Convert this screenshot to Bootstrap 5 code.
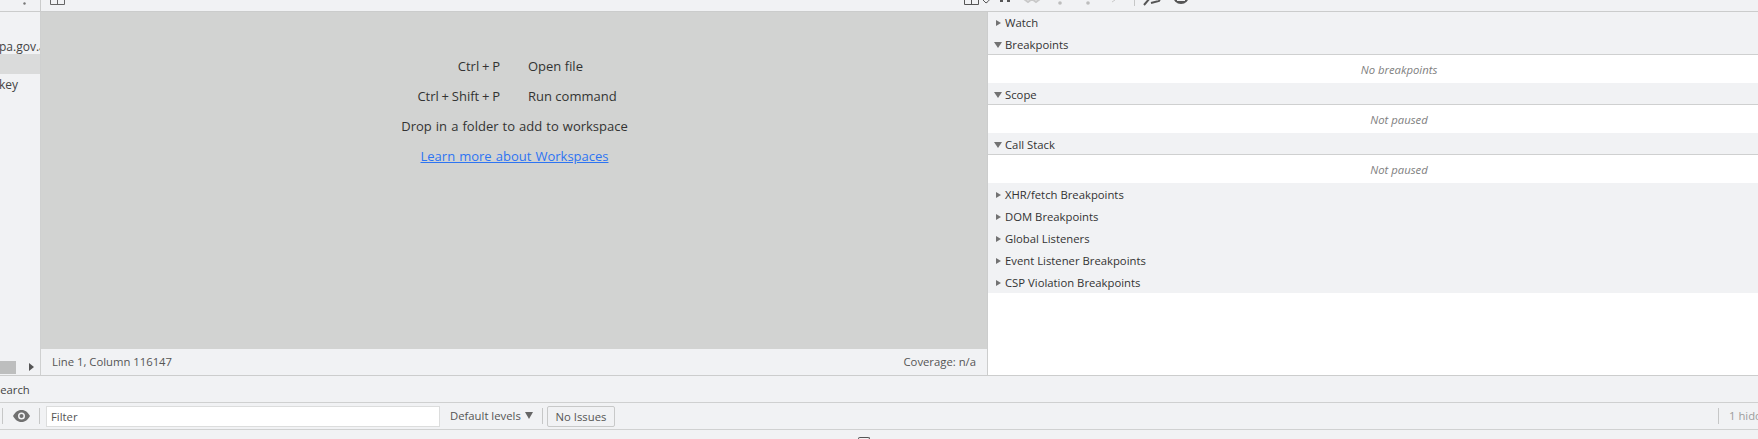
<!DOCTYPE html>
<html lang="en">
<head>
<meta charset="utf-8">
<title>Sources panel</title>
<link href="https://cdn.jsdelivr.net/npm/bootstrap@5.3.0/dist/css/bootstrap.min.css" rel="stylesheet">
<style>
html,body{height:439px;overflow:hidden}
body{background:#f1f2f4;font-family:"Open Sans","Noto Sans",sans-serif;font-size:11.3px;color:#444;line-height:1}
.shell{height:439px;width:1758px}
.topbar{height:12px;border-bottom:1px solid #cbcccc;background:#f1f2f4;flex:none}
.topleft{width:41px;border-right:1px solid #cbcccc;height:100%;flex:none}
.topbar svg{display:block}
.mainrow{height:364px;flex:none;border-bottom:1px solid #cccdcd}
.navside{width:41px;flex:none;border-right:1px solid #cfd0d0;overflow:hidden;background:#f1f2f4;font-size:12px;color:#444}
.navgap-top{height:28px;flex:none}
.navline{height:14px;line-height:14px;white-space:nowrap;flex:none;margin-left:-1px}
.navsel{height:20px;background:#dadbdb;flex:none}
.navgap{height:4px;flex:none}
.navtail{height:14px;margin-top:auto;margin-bottom:1px}
.navthumb{width:16px;height:13px;background:#bdbebe}
.tri-r{width:0;height:0;border-left:5px solid #555;border-top:4px solid transparent;border-bottom:4px solid transparent;margin-right:-2px}
.midcol{width:947px;flex:none;border-right:1px solid #cccdcd}
.editor{background:#d2d3d2;flex:1 1 auto;font-size:13px;color:#333;padding-top:44px}
.kbline{height:30px;line-height:20px}
.kbkey{width:487px;text-align:right;padding-right:28px;word-spacing:-.6px}
.hintline{height:30px;line-height:20px;width:946px;text-align:center;word-spacing:.7px;padding-left:1px}
.hintlink{color:#2d74f2}
.statusline{height:26px;flex:none;padding:0 11px 0 11px;color:#555}
.rightcol{flex:1 1 auto;background:#fff;min-width:0}
.sechead{height:22px;background:#f1f2f4;padding-left:6px;color:#333;gap:3px;flex:none}
.seclow{padding-top:2px}
.secopen{border-bottom:1px solid #cfd0d0;padding-top:3px}
.secfirst{height:21px;padding-top:1px}
.tribox{width:8px;display:flex;justify-content:center;flex:none}
.tri-rs{width:0;height:0;border-left:5px solid #727272;border-top:3.5px solid transparent;border-bottom:3.5px solid transparent}
.tri-d{width:0;height:0;border-top:6px solid #727272;border-left:4px solid transparent;border-right:4px solid transparent}
.secbody{height:28px;background:#fff;color:#808080;font-style:italic;padding-left:52px;padding-top:1px;flex:none}
.searchrow{height:27px;flex:none;border-bottom:1px solid #cfd0d0;color:#444;overflow:hidden;padding-top:2px}
.searchrow span{margin-left:-6px}
.conbar{height:27px;flex:none;border-bottom:1px solid #d0d1d1;overflow:hidden}
.vsep{width:1px;height:16px;background:#c6c7c7;flex:none}
.vsep-a{margin-left:2px}
.vsep-b{margin-left:9px}
.vsep-c{margin-left:1103px}
.eyeicon{margin-left:10px;flex:none}
.filterbox{width:394px;height:21px;background:#fff;border:1px solid #dcdddd;margin-left:6px;padding-left:4px;padding-top:2px;color:#555;flex:none}
.levels{margin-left:10px;color:#555;width:92px;flex:none;gap:4px}
.tri-lv{width:0;height:0;border-top:7px solid #666;border-left:4px solid transparent;border-right:4px solid transparent}
.issuesbtn{height:21px;width:68px;margin-left:4px;border:1px solid #c8c9c9;border-radius:2px;color:#555;flex:none;padding-top:2px}
.hiddentxt{color:#9c9c9c;margin-left:10px;white-space:nowrap}
.bottomstrip{height:9px;flex:none;position:relative}
.dockicon{width:12px;height:7px;border:1px solid #555;border-bottom:0;border-radius:2px 2px 0 0;position:absolute;left:858px;top:7px}
.topicons{flex:none;margin-left:auto}
.topleftgap{margin-left:4px;flex:none}
</style>
</head>
<body>
<div class="shell d-flex flex-column">
  <div class="topbar d-flex overflow-hidden">
    <div class="topleft">
      <svg width="40" height="11"><circle cx="24.500" cy="3.500" r="1.200" fill="#777"/></svg>
    </div>
    <svg width="20" height="11" class="topleftgap"><path d="M5.500 -2V4.500H19.500V-2M12.500 -2V4.500" fill="none" stroke="#666"/></svg>
    <svg width="800" height="11" class="topicons"><g transform="translate(-958 0)">
      <path d="M964.500 -2V4.500H978.500V-2M971.500 0V4.500" fill="none" stroke="#555"/>
      <path d="M981 -2L986 3L988 1.500L990 -1" fill="none" stroke="#555"/>
      <rect x="1000" y="-3" width="3" height="5" fill="#555"/><rect x="1007" y="-3" width="3" height="5" fill="#555"/>
      <path d="M1024 -1L1028 2L1032 -1L1036 2L1040 -1" fill="none" stroke="#c9c9c9" stroke-width="2"/>
      <circle cx="1060" cy="3" r="1.800" fill="#bdbdbd"/><circle cx="1088" cy="3" r="1.800" fill="#bdbdbd"/>
      <path d="M1112 -2L1115 0L1112 2" fill="none" stroke="#c9c9c9"/>
      <rect x="1134" y="-3" width="1" height="9" fill="#c6c7c7"/>
      <path d="M1144 5L1150 -2M1149 -1H1160L1159 1L1151 3" fill="none" stroke="#555" stroke-width="2"/>
      <circle cx="1181" cy="-4" r="8" fill="#555"/><rect x="1177" y="-1" width="8" height="2" fill="#f1f2f4"/>
    </g></svg>
  </div>
  <div class="mainrow d-flex">
    <div class="navside d-flex flex-column">
      <div class="navgap-top"></div>
      <div class="navline">pa.gov.ar</div>
      <div class="navsel"></div>
      <div class="navgap"></div>
      <div class="navline">key</div>
      <div class="navtail d-flex align-items-center justify-content-between pe-2">
        <div class="navthumb"></div><div class="tri-r"></div>
      </div>
    </div>
    <div class="midcol d-flex flex-column">
      <div class="editor">
        <div class="kbline d-flex"><div class="kbkey">Ctrl + P</div><div>Open file</div></div>
        <div class="kbline d-flex"><div class="kbkey">Ctrl + Shift + P</div><div>Run command</div></div>
        <div class="hintline">Drop in a folder to add to workspace</div>
        <div class="hintline"><a class="hintlink" href="#">Learn more about Workspaces</a></div>
      </div>
      <div class="statusline d-flex align-items-center justify-content-between">
        <span>Line 1, Column 116147</span><span>Coverage: n/a</span>
      </div>
    </div>
    <div class="rightcol d-flex flex-column">
      <div class="sechead d-flex align-items-center"><div class="tribox"><div class="tri-rs"></div></div><span>Watch</span></div>
      <div class="sechead secopen secfirst d-flex align-items-center"><div class="tribox"><div class="tri-d"></div></div><span>Breakpoints</span></div>
      <div class="secbody d-flex align-items-center justify-content-center">No breakpoints</div>
      <div class="sechead secopen d-flex align-items-center"><div class="tribox"><div class="tri-d"></div></div><span>Scope</span></div>
      <div class="secbody d-flex align-items-center justify-content-center">Not paused</div>
      <div class="sechead secopen d-flex align-items-center"><div class="tribox"><div class="tri-d"></div></div><span>Call Stack</span></div>
      <div class="secbody d-flex align-items-center justify-content-center">Not paused</div>
      <div class="sechead seclow d-flex align-items-center"><div class="tribox"><div class="tri-rs"></div></div><span>XHR/fetch Breakpoints</span></div>
      <div class="sechead seclow d-flex align-items-center"><div class="tribox"><div class="tri-rs"></div></div><span>DOM Breakpoints</span></div>
      <div class="sechead seclow d-flex align-items-center"><div class="tribox"><div class="tri-rs"></div></div><span>Global Listeners</span></div>
      <div class="sechead seclow d-flex align-items-center"><div class="tribox"><div class="tri-rs"></div></div><span>Event Listener Breakpoints</span></div>
      <div class="sechead seclow d-flex align-items-center"><div class="tribox"><div class="tri-rs"></div></div><span>CSP Violation Breakpoints</span></div>
    </div>
  </div>
  <div class="searchrow d-flex align-items-center"><span>Search</span></div>
  <div class="conbar d-flex align-items-center">
    <div class="vsep vsep-a"></div>
    <svg width="17" height="12" viewBox="0 0 17 12" class="eyeicon"><path fill-rule="evenodd" d="M0 6C2.500 1.500 5.500 0 8.500 0S14.500 1.500 17 6C14.500 10.500 11.500 12 8.500 12S2.500 10.500 0 6ZM8.500 2.500A3.500 3.500 0 1 0 8.500 9.500A3.500 3.500 0 1 0 8.500 2.500Z" fill="#707070"/><circle cx="8.500" cy="6" r="2" fill="#707070"/></svg>
    <div class="vsep vsep-b"></div>
    <div class="filterbox d-flex align-items-center">Filter</div>
    <div class="levels d-flex align-items-center"><span>Default levels</span><div class="tri-lv"></div></div>
    <div class="vsep"></div>
    <div class="issuesbtn d-flex align-items-center justify-content-center">No Issues</div>
    <div class="vsep vsep-c"></div>
    <div class="hiddentxt">1 hidden</div>
  </div>
  <div class="bottomstrip"><div class="dockicon"></div></div>
</div>
<script src="https://cdn.jsdelivr.net/npm/bootstrap@5.3.0/dist/js/bootstrap.bundle.min.js"></script>
</body>
</html>
